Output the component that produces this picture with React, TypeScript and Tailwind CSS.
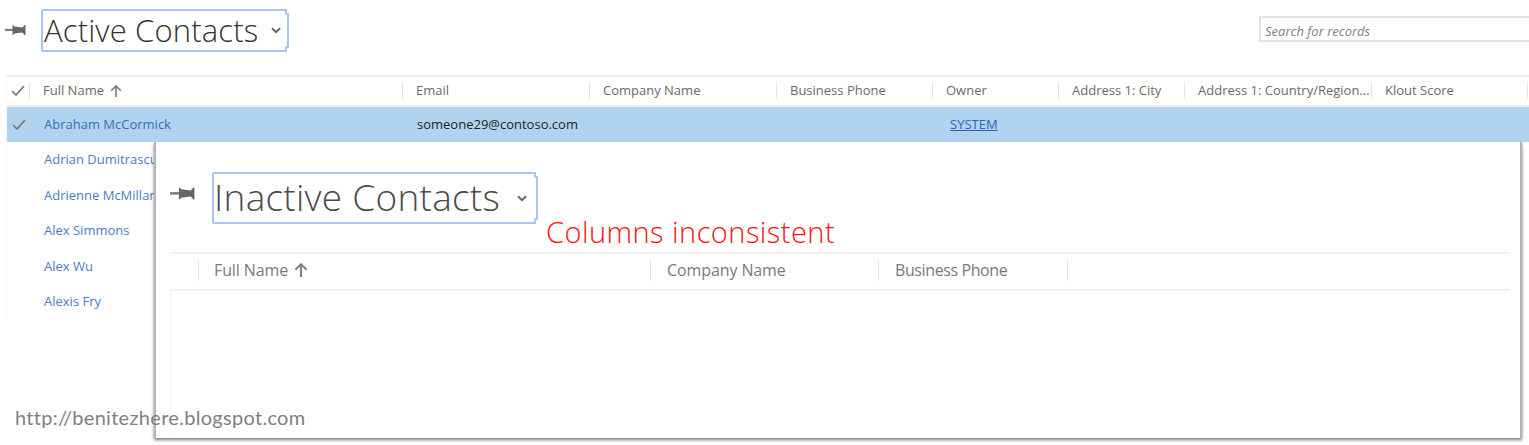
const font = "font-['Open_Sans','Noto_Sans',sans-serif]";

function PinIcon({ className }: { className?: string }) {
  return (
    <svg viewBox="0 0 21 14" className={className} fill="#666666">
      <rect x="0" y="5.8" width="9" height="2.2" fill="#808080" />
      <path d="M7.5 1.5L9.5 3.5L17.5 4.5L19.5 2L20.5 2V12L19.5 12L17.5 9.5L9.5 10.5L7.5 12.5Z" />
    </svg>
  );
}

function Chevron({ className }: { className?: string }) {
  return (
    <svg viewBox="0 0 10 7" className={className} fill="none" stroke="#666666" strokeWidth="2">
      <path d="M1 1.2l4 4 4-4" />
    </svg>
  );
}

function Check({ className }: { className?: string }) {
  return (
    <svg viewBox="0 0 14 11" className={className} fill="none" stroke="#777777" strokeWidth="1.7">
      <path d="M1 6l4 4 8-9" />
    </svg>
  );
}

function ArrowUp({ className }: { className?: string }) {
  return (
    <svg viewBox="0 0 12 12" className={className} fill="none" stroke="#7a7a7a" strokeWidth="1.6">
      <path d="M6 12V1M1.2 5.8L6 1l4.8 4.8" />
    </svg>
  );
}

function Notch({ bottom }: { bottom?: boolean }) {
  return (
    <span
      className={
        bottom
          ? "absolute -bottom-[2px] -right-[2px] h-[6px] w-[4px] rounded-tl-[2px] border-l-2 border-t-2 border-[#a9c6f3] bg-white"
          : "absolute -right-[2px] -top-[2px] h-[6px] w-[4px] rounded-bl-[2px] border-b-2 border-l-2 border-[#a9c6f3] bg-white"
      }
    />
  );
}

const columns = [
  { label: "Email", w: "w-[187px]" },
  { label: "Company Name", w: "w-[187px]" },
  { label: "Business Phone", w: "w-[156px]" },
  { label: "Owner", w: "w-[126px]" },
  { label: "Address 1: City", w: "w-[126px]" },
  { label: "Address 1: Country/Region...", w: "w-[187px]" },
  { label: "Klout Score", w: "w-[156px]" },
];

const names = ["Adrian Dumitrascu", "Adrienne McMillan", "Alex Simmons", "Alex Wu", "Alexis Fry"];

export default function App() {
  return (
    <div className={`${font} relative h-[445px] w-[1529px] overflow-hidden bg-white`}>
      <div className="flex h-[75px] items-start">
        <PinIcon className="ml-[5px] mt-[23px] h-[14px] w-[21px]" />
        <div className="relative ml-[15px] mt-[9px] flex h-[43px] w-[248px] items-center rounded-[2px] border-2 border-[#a9c6f3] pl-[1px]">
          <span className="text-[31px] font-light leading-none tracking-[0.15px] text-[#333333]">Active Contacts</span>
          <Chevron className="ml-[13px] h-[7px] w-[10px]" />
          <Notch />
          <Notch bottom />
        </div>
        <div className="ml-auto mt-[16px] flex h-[26px] w-[270px] items-center border-2 border-r-0 border-[#e2e2e2] pl-[4px] pt-[5px] text-[13px] italic text-[#808080]">
          Search for records
        </div>
      </div>

      <div className="ml-[6px] border-l border-[#f6f6f6]">
        <div className="flex h-[32px] items-center border-y-2 border-[#ececec] pb-[1px] text-[13px] text-[#6a6a6a]">
          <div className="flex h-[17px] w-[23px] items-center justify-center border-r border-[#e4e4e4]">
            <Check className="h-[11px] w-[14px]" />
          </div>
          <div className="flex h-[17px] w-[373px] items-center gap-[6px] border-r border-[#e4e4e4] pl-[13px]">
            Full Name <ArrowUp className="h-[12px] w-[12px]" />
          </div>
          {columns.map((c) => (
            <div key={c.label} className={`flex h-[17px] ${c.w} items-center whitespace-nowrap border-r border-[#e4e4e4] pl-[13px]`}>
              {c.label}
            </div>
          ))}
        </div>

        <div className="flex h-[35px] items-center bg-[#b0d4ef] text-[13px]">
          <div className="flex w-[23px] justify-center">
            <Check className="h-[11px] w-[14px]" />
          </div>
          <div className="w-[373px] pl-[14px] text-[#3b6cb8]">Abraham McCormick</div>
          <div className="w-[530px] pl-[14px] text-[#222222]">someone29@contoso.com</div>
          <div className="pl-[17px] text-[#2f63b5] underline">SYSTEM</div>
        </div>

        <div>
          {names.map((n) => (
            <div key={n} className="flex h-[35.5px] items-center pl-[37px] text-[13px] text-[#4a7cc8]">
              {n}
            </div>
          ))}
        </div>
      </div>

      <div className="absolute left-[154px] top-[142px] h-[296px] w-[1368px] border-x-2 border-[#b4b4b4] bg-white pl-[14px] pr-[10px] shadow-[0_2px_3px_rgba(0,0,0,0.5)]">
        <div className="flex h-[110px] items-start">
          <PinIcon className="mt-[43px] h-[17px] w-[25px]" />
          <div className="relative ml-[17px] mt-[30px] flex h-[52px] w-[326px] items-center rounded-[2px] border-2 border-[#a9c6f3]">
            <span className="-mt-[4px] text-[37px] font-light leading-none tracking-[0.25px] text-[#4a4a4a]">Inactive Contacts</span>
            <Chevron className="ml-[17px] h-[7px] w-[10px]" />
            <Notch />
            <Notch bottom />
          </div>
          <span className="ml-[8px] mt-[71px] text-[29px] font-light leading-[38px] tracking-[0.45px] text-[#ff1010]">Columns inconsistent</span>
        </div>
        <div className="flex h-[39px] items-center border-y-2 border-[#f0f0f0] pb-[3px] text-[16px] tracking-[-0.1px] text-[#7a7a7a]">
          <div className="h-[21px] w-[29px] border-r border-[#e4e4e4]" />
          <div className="flex h-[21px] w-[452px] items-center gap-[6px] border-r border-[#e4e4e4] pl-[15px]">
            Full Name <ArrowUp className="h-[14px] w-[14px]" />
          </div>
          <div className="flex h-[21px] w-[228px] items-center border-r border-[#e4e4e4] pl-[16px]">Company Name</div>
          <div className="flex h-[21px] w-[189px] items-center border-r border-[#e4e4e4] pl-[16px] tracking-[-0.4px]">Business Phone</div>
        </div>
        <div className="h-[145px] w-[1px] bg-[#f4f4f4]" />
      </div>

      <div className="absolute left-[15px] top-[405px] font-['Lato',sans-serif] text-[20px] leading-[24px] tracking-[0.3px] text-[#808080]">
        http://benitezhere.blogspot.com
      </div>
    </div>
  );
}
